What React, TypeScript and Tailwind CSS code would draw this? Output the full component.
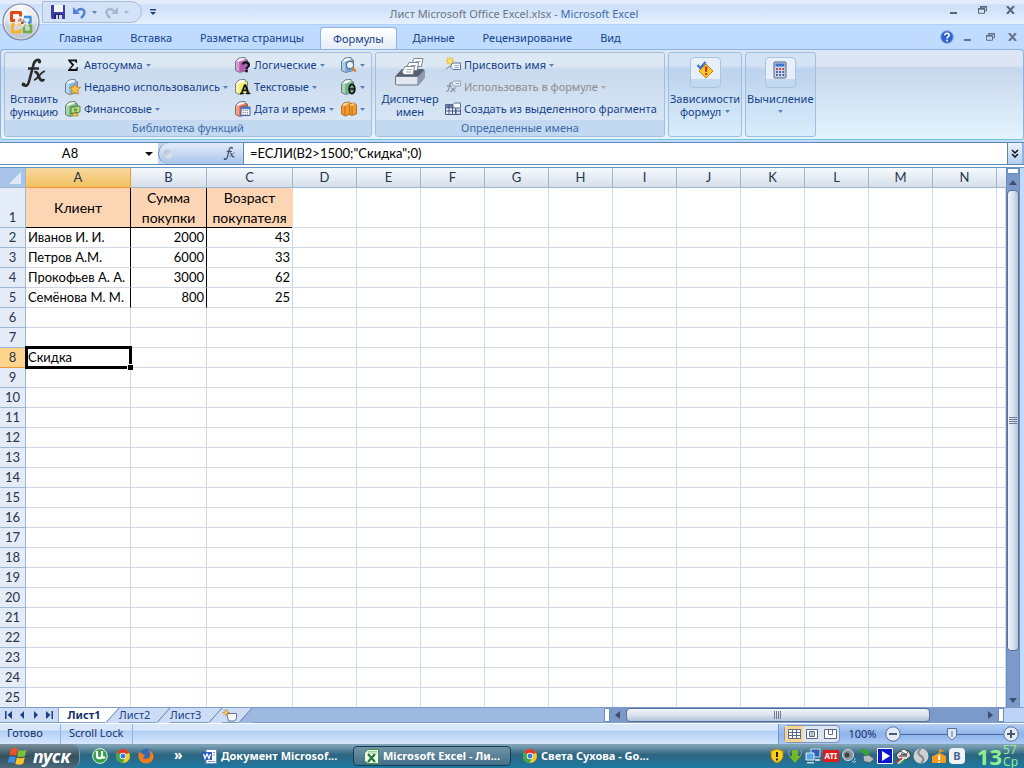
import type { ReactNode } from 'react'
import clsx from 'clsx'

const UI = "font-['Noto_Sans','Open_Sans',sans-serif]"
const CELL = "font-['Lato','Noto_Sans',sans-serif]"

const TABS = ['Главная', 'Вставка', 'Разметка страницы', 'Формулы', 'Данные', 'Рецензирование', 'Вид']
const COLUMNS = ['A', 'B', 'C', 'D', 'E', 'F', 'G', 'H', 'I', 'J', 'K', 'L', 'M', 'N']
const DATA: Record<number, [string, number, number]> = {
  2: ['Иванов И. И.', 2000, 43],
  3: ['Петров А.М.', 6000, 33],
  4: ['Прокофьев А. А.', 3000, 62],
  5: ['Семёнова М. М.', 800, 25],
}

function Caret({ color = '#5d82b5' }: { color?: string }) {
  return (
    <svg width="5" height="3" viewBox="0 0 5 3" className="shrink-0">
      <path d="M0 0h5L2.5 3z" fill={color} />
    </svg>
  )
}

/* ---------- icons ---------- */

function OfficeLogo() {
  return (
    <svg width="38" height="38" viewBox="0 0 38 38">
      <defs>
        <radialGradient id="orb" cx="50%" cy="25%" r="80%">
          <stop offset="0" stopColor="#ffffff" />
          <stop offset=".55" stopColor="#dfe4ec" />
          <stop offset="1" stopColor="#9aa8bd" />
        </radialGradient>
      </defs>
      <circle cx="19" cy="19" r="18" fill="url(#orb)" stroke="#7f8ea6" strokeWidth="1.2" />
      <circle cx="19" cy="19" r="16.5" fill="none" stroke="#fff" strokeOpacity=".8" />
      <path d="M3 20a16 16 0 0 0 32 0c-9 3-23 3-32 0z" fill="#c3cbd9" opacity=".5" />
      <g fill="none" strokeLinejoin="round">
        <path d="M13 17.500H9.500V9.500h9v4" stroke="#dd4a12" strokeWidth="3" />
        <path d="M18.500 15v2.500H16" stroke="#e8763c" strokeWidth="2" />
        <path d="M22 14h6.500v5.500H26" stroke="#3a8fe0" strokeWidth="2.400" />
        <path d="M21.500 16v3H24" stroke="#5fb0ee" strokeWidth="1.600" />
        <path d="M13 21.500h-2.500v7.500h7.500v-3" stroke="#f5b32a" strokeWidth="2.800" />
        <path d="M15 21.500h3.500V24" stroke="#f7ca62" strokeWidth="1.800" />
        <path d="M22 24v5h7v-6.500h-2.500" stroke="#6fae3c" strokeWidth="2.600" />
        <path d="M22 22.500h2.500" stroke="#8cc454" strokeWidth="1.800" />
      </g>
      <path d="M19 18.500h2.500V21H19z" fill="#b24b18" />
    </svg>
  )
}

function SaveIcon() {
  return (
    <svg width="14" height="14" viewBox="0 0 14 14">
      <path d="M0 0h14v14H1L0 13z" fill="#3c3fa8" />
      <path d="M3 0h9v7H3z" fill="#f4f7ff" />
      <path d="M3 9h8v5H3z" fill="#20246c" />
      <path d="M5 10h2v4H5zM8 10h3v4H8z" fill="#cfd6ee" />
    </svg>
  )
}

function UndoIcon({ color, flip = false }: { color: string; flip?: boolean }) {
  return (
    <svg width="13" height="13" viewBox="0 0 13 13" className={flip ? '-scale-x-100' : undefined}>
      <path d="M4 5c4-4 9-1 7 3-.6 1.600-1.500 2.800-3 4" fill="none" stroke={color} strokeWidth="2.400" />
      <path d="M0 1v7h7z" fill={color} />
    </svg>
  )
}

function Book({ cover, side, children }: { cover: string; side: string; children?: ReactNode }) {
  return (
    <svg width="16" height="16" viewBox="0 0 16 16" className="shrink-0">
      <path d="M.5 4.500 4 1l6-.7v1.500L12.500 3v10.500L4.500 15.500l-4-2z" fill={side} stroke="#5b6470" strokeWidth=".8" />
      <path d="M4.300 5 12 3v10.500l-7.700 1.800z" fill={cover} />
      <path d="M1.500 4.500 4.300 1.800l5.200-.7v1L4.500 4.200z" fill="#fff" />
      {children}
    </svg>
  )
}

const icons = {
  sum: (
    <svg width="16" height="16" viewBox="0 0 16 16" className="shrink-0">
      <path d="M3 2.500h9V6h-1c-.2-1.300-.7-1.800-2-1.800H6l3.200 3.600L5.600 12h4.200c1.300 0 1.900-.6 2.200-1.900h1L12.500 14H3v-1l4-4.700L3 3.600z" fill="#111" />
    </svg>
  ),
  recent: (
    <Book cover="#79b9e8" side="#b7dbf2">
      <path d="m10 4.500 1.600 3.500 3.900.5-2.800 2.600.7 4.100L10 13.300l-3.400 1.900.7-4.100-2.800-2.600 3.900-.5z" fill="#ffc640" stroke="#c9741a" strokeWidth=".8" />
    </Book>
  ),
  finance: (
    <Book cover="#6fae72" side="#a8d3a8">
      <path d="M6 6.500 15 5v6l-9 1.500z" fill="#b9d97d" stroke="#417b3d" strokeWidth=".8" />
      <circle cx="10.500" cy="8.800" r="1.600" fill="#5c9d45" />
      <path d="M7.500 12.300h5.500v2.700H7.500z" fill="#f0c54b" stroke="#8e7426" strokeWidth=".6" />
    </Book>
  ),
  logic: (
    <Book cover="#b05fae" side="#d79fd6">
      <path d="M8 7.500C8 4.500 14 4.500 14 8c0 2-2.500 2-2.500 4" fill="none" stroke="#111" strokeWidth="2.200" />
      <path d="M10.300 13h2.400v2.300h-2.400z" fill="#111" />
    </Book>
  ),
  text: (
    <Book cover="#f3ec6a" side="#f8f4ae">
      <path d="M5 15v-1h1l3.200-8.500h1.800L14.200 14h1v1h-4v-1h1l-.6-2H8.200l-.7 2h1.100v1zm3.700-4.200h2.500l-1.300-3.600z" fill="#111" stroke="#111" strokeWidth=".4" />
    </Book>
  ),
  date: (
    <Book cover="#e2603c" side="#f0a184">
      <path d="M6 6h9v8.500H6z" fill="#fff" stroke="#3f62a8" />
      <path d="M6 6h9v2.200H6z" fill="#4b78c8" />
      <path d="M7.500 9.500h6.500M7.500 11.500h6.500M7.500 13.300h6.500" stroke="#7c8aa8" strokeDasharray="1.200 1" />
    </Book>
  ),
  lookup: (
    <Book cover="#6fa3dc" side="#add0ee">
      <circle cx="9" cy="8" r="3.600" fill="#e8f5ff" stroke="#5f6f86" strokeWidth="1.200" />
      <path d="m11.500 10.800 3.300 3.700" stroke="#e07b28" strokeWidth="2.400" />
    </Book>
  ),
  math: (
    <Book cover="#6fae86" side="#a7d3b5">
      <ellipse cx="11" cy="10" rx="2.800" ry="4.600" fill="none" stroke="#111" strokeWidth="1.800" />
      <path d="M8.500 10h5" stroke="#111" strokeWidth="1.400" />
    </Book>
  ),
  more: (
    <svg width="16" height="16" viewBox="0 0 16 16" className="shrink-0">
      <path d="m.5 5 3-3.500 5-.5 1 1.500 4-.5 2 2v9l-5 1.500-2-1-4.500 1.500L.5 13z" fill="#f29a2e" stroke="#a85f12" strokeWidth=".8" />
      <path d="M4 5v9.500M8.500 3.500V14M11 5v9" stroke="#b86a16" strokeWidth=".9" />
      <path d="m1.500 4.600 2.500-2.600 4-.4-3.500 3zM9 4l2.500-1.500h2.500L11 4.700z" fill="#ffe0b0" />
    </svg>
  ),
  assign: (
    <svg width="16" height="16" viewBox="0 0 16 16" className="shrink-0">
      <path d="M5 0v8M1 4h8M2 1l6 6M8 1 2 7" stroke="#f0bc23" strokeWidth="1.300" />
      <circle cx="5" cy="4" r="2" fill="#ffe873" />
      <path d="M8 6h7.500v6.500H8L6 10.500V8z" fill="#f7faff" stroke="#5e7191" />
      <path d="M9.500 8.500H14M9.500 10.500H14" stroke="#93a6c4" />
      <path d="M1 12.500c2-3 3-3 5-2.500" fill="none" stroke="#6d7b92" />
    </svg>
  ),
  use: (
    <svg width="16" height="16" viewBox="0 0 16 16" className="shrink-0">
      <path d="M7.500 4c-2-1-2.600.5-3 3s-.8 6-3.500 5M2 7h4.500M6 9c2-.5 2.500 4 4.500 3M10.500 8.500 5.500 13" fill="none" stroke="#8c95a3" strokeWidth="1.300" />
      <path d="M9 2h6.500v5H9L7.500 5.500v-2z" fill="#e9eef5" stroke="#93a2b8" />
      <path d="M10.500 4.500H14" stroke="#93a2b8" />
    </svg>
  ),
  create: (
    <svg width="16" height="16" viewBox="0 0 16 16" className="shrink-0">
      <path d="M.5 3.500h10v10H.5z" fill="#eef3fb" stroke="#465a80" />
      <path d="M.5 3.500h10v3.300H.5z" fill="#6d80a6" />
      <path d="M.5 6.800h15M.5 10h15M4 3.500v10M7.500 3.500v10M11 8v5.500" stroke="#465a80" />
      <path d="M9.500 2h6v5h-6L8 5.500v-2z" fill="#f8fbff" stroke="#5e7191" />
      <path d="M10.500 13.500h5V8" fill="none" stroke="#465a80" />
    </svg>
  ),
}

function FxIcon({ size, color = '#2b2b2b' }: { size: number; color?: string }) {
  return (
    <svg width={size} height={size} viewBox="0 0 32 32">
      <path d="M22 4.500c-1-2.500-5-2.500-6.500 3L11 24.500c-1 4-3 5-5.500 3.500M10 11.500h11" fill="none" stroke={color} strokeWidth="2.600" />
      <circle cx="21.500" cy="4.800" r="1.700" fill={color} />
      <circle cx="5.500" cy="27.500" r="1.900" fill={color} />
      <path d="M16.500 15.500c4-2.500 4 8 7.500 8 1 0 1.600-.6 2-1.500" fill="none" stroke={color} strokeWidth="2.800" />
      <path d="M27 14.500c-3-1-7 7.500-11 8.500" fill="none" stroke={color} strokeWidth="1.700" />
    </svg>
  )
}

function NameManagerIcon() {
  return (
    <svg width="32" height="32" viewBox="0 0 32 32">
      <path d="M1.500 19 8 12h21l1.500 1v8l-6 7H2.500l-1-1z" fill="#566173" />
      <path d="M1.500 19.500h22.500V28H2.500l-1-1z" fill="#e3e8f0" stroke="#6b7686" />
      <path d="m24 19.500 6.500-6.500v8L24 28z" fill="#909cae" />
      <g fill="#fff" stroke="#7a8596" strokeWidth="1">
        <path d="M20 1.500h9l-1.500 8H19l-1.500-2z" />
        <path d="M15 5.500h9.500l-1.500 8h-9l-2-2.500z" />
        <path d="M11 9.500h9.500l-1.500 8h-9l-2-2.500z" />
      </g>
      <path d="M21.500 4.500h5M17 8.500h5M12.500 12.500h5.500M12 15h5.500" stroke="#9aa7ba" />
    </svg>
  )
}

function AuditIcon() {
  return (
    <svg width="18" height="18" viewBox="0 0 18 18">
      <path d="m10 3 7 7-7 7-7-7z" fill="#ffc828" stroke="#b88717" />
      <path d="M8.800 5.500h2.700l-.6 5.500H9.400zM9.200 12h2v2h-2z" fill="#d02a1c" />
      <path d="m1.500 4 2.800 3L9.500 1" fill="none" stroke="#3e73c8" strokeWidth="2.200" />
    </svg>
  )
}

function CalcIcon() {
  return (
    <svg width="14" height="18" viewBox="0 0 14 18">
      <rect x="1" y="1" width="12" height="16" rx="1" fill="#c9d5ea" stroke="#51607e" />
      <path d="M2.500 2.500h9v3h-9z" fill="#3f73d2" />
      <g strokeWidth="1.800" strokeDasharray="1.800 1.400">
        <path d="M3 8h8.500" stroke="#c04141" />
        <path d="M3 11h8.500M3 14h8.500" stroke="#4d5f98" />
      </g>
    </svg>
  )
}

function ChromeIcon() {
  return (
    <svg width="14" height="14" viewBox="0 0 14 14" className="shrink-0">
      <circle cx="7" cy="7" r="7" fill="#f5cb24" />
      <path d="M7 7 .9 3.500A7 7 0 0 1 13.100 3.500z" fill="#dc3b2a" />
      <path d="M7 7 .9 3.500A7 7 0 0 0 6.500 14L9 9z" fill="#3fa648" />
      <circle cx="7" cy="7" r="3.300" fill="#fff" />
      <circle cx="7" cy="7" r="2.500" fill="#3f7fd6" />
    </svg>
  )
}

function WindowButtons({ big = false }: { big?: boolean }) {
  const color = big ? '#66738a' : '#56647c'
  return (
    <>
      <button type="button" aria-label="Свернуть" className="flex h-4 w-4 items-center justify-center">
        <svg width="8" height="8" viewBox="0 0 8 8"><path d="M0 6h7v2H0z" fill={color} /></svg>
      </button>
      <button type="button" aria-label="Восстановить" className="flex h-4 w-4 items-center justify-center">
        <svg width="9" height="8" viewBox="0 0 9 8"><path d="M2.500 2.500V.8h6v4H7M.5 2.800h6v4.500h-6z" fill="none" stroke={color} /><path d="M0 2h7v1.500H0zM2 0h7v1.500H2z" fill={color} /></svg>
      </button>
      <button type="button" aria-label="Закрыть" className="flex h-4 w-4 items-center justify-center">
        <svg width="9" height="8" viewBox="0 0 9 8"><path d="m1 0 7 8M8 0 1 8" stroke={color} strokeWidth="2" /></svg>
      </button>
    </>
  )
}

/* ---------- title and ribbon ---------- */

function TitleBar() {
  return (
    <header className="flex h-[25px] shrink-0 items-center border-b border-[#b0cffa] bg-linear-to-b from-[#e3ecfa] from-15% via-[#cbdff8] via-20% to-[#e4f0fd] pl-[42px] pr-1">
      <div className="flex h-[22px] items-center gap-2 rounded-r-full border border-[#a9bfdf] bg-[#d3e2f6] pl-2 pr-3">
        <button type="button" aria-label="Сохранить"><SaveIcon /></button>
        <button type="button" aria-label="Отменить" className="flex items-center gap-1.5"><UndoIcon color="#4f7fd6" /><Caret /></button>
        <button type="button" aria-label="Вернуть" className="flex items-center gap-1.5"><UndoIcon color="#a9b6ca" flip /><Caret color="#a9b6ca" /></button>
      </div>
      <button type="button" aria-label="Настройка панели быстрого доступа" className="ml-2">
        <svg width="6" height="7" viewBox="0 0 6 7"><path d="M0 0h6v1.500H0zM0 3h6L3 6z" fill="#24427c" /></svg>
      </button>
      <h1 className="flex-1 pr-[74px] pt-1 text-center text-[11px] leading-4 text-[#6b7584]">
        Лист Microsoft Office Excel.xlsx - <span className="text-[#3e6aaa]">Microsoft Excel</span>
      </h1>
      <div className="flex gap-3 pb-1 pr-0.5">
        <WindowButtons />
      </div>
    </header>
  )
}

function TabStrip() {
  return (
    <nav className="flex h-6 shrink-0 items-end gap-1 bg-[#bfdbff] pl-[47px] pr-1">
      {TABS.map((tab) => (
        <button
          key={tab}
          type="button"
          className={clsx(
            'h-[22px] whitespace-nowrap rounded-t px-3 text-[11px] leading-4 text-[#15428b]',
            tab === 'Формулы' && 'border-x border-t border-[#8db2e3] bg-linear-to-b from-white to-[#e4ecf7]',
          )}
        >
          {tab}
        </button>
      ))}
      <div className="ml-auto flex items-center gap-1.5 self-center">
        <button type="button" aria-label="Справка">
          <svg width="14" height="14" viewBox="0 0 14 14">
            <circle cx="7" cy="7" r="6.300" fill="#2e63d0" stroke="#8fa9d8" />
            <path d="M4.800 5.300C5 2.500 9.400 2.700 9.200 5.200 9 6.700 7 6.700 7 8.500" fill="none" stroke="#fff" strokeWidth="1.600" />
            <circle cx="7" cy="10.500" r="1" fill="#fff" />
          </svg>
        </button>
        <WindowButtons big />
      </div>
    </nav>
  )
}

function RibbonItem({ icon, label, disabled = false, menu = true }: { icon: ReactNode; label: string; disabled?: boolean; menu?: boolean }) {
  return (
    <button
      type="button"
      aria-label={label || 'Категория функций'}
      disabled={disabled}
      className={clsx('flex h-[22px] items-center gap-[3px] whitespace-nowrap', disabled ? 'text-[#8d8d8d]' : 'text-[#15428b]')}
    >
      {icon}
      {label && <span>{label}</span>}
      {menu && <Caret color={disabled ? '#a9a9a9' : undefined} />}
    </button>
  )
}

function Group({ title, children }: { title: string; children: ReactNode }) {
  return (
    <section className="flex flex-col overflow-hidden rounded-[3px] border border-[#a3bfdd] bg-linear-to-b from-[#dde8f5] from-15% via-[#c9daee] via-20% to-[#dce9f6]">
      <div className="flex flex-1 px-0.5 pt-px">{children}</div>
      <h2 className="h-4 bg-[#c2d9f1] text-center text-[11px] leading-4 text-[#3e6aaa]">{title}</h2>
    </section>
  )
}

function BigButton({ icon, lines }: { icon: ReactNode; lines: [string, string] }) {
  return (
    <button type="button" className="flex w-full flex-col items-center pt-[3px] leading-[13px] text-[#15428b]">
      <span className="mb-[3px] block h-8">{icon}</span>
      <span>{lines[0]}</span>
      <span>{lines[1]}</span>
    </button>
  )
}

function CollapsedGroup({ icon, line, last }: { icon: ReactNode; line: string; last?: string }) {
  return (
    <button type="button" className="flex flex-col items-center rounded-[3px] border border-[#9dbfe0] bg-linear-to-b from-[#d3e3f6] from-15% via-[#bdd2ec] via-20% to-[#d8eefb] px-px pt-1 leading-[13px] text-[#15428b]">
      <span className="mb-1 flex h-[31px] w-[31px] justify-center rounded border border-[#a9c3e0] bg-linear-to-b from-[#e7f0fa] from-72% to-[#c2d9f0] to-73% pt-[3px]">{icon}</span>
      <span>{line}</span>
      <span className="flex h-3 items-center gap-1">{last}<Caret /></span>
    </button>
  )
}

function Ribbon() {
  return (
    <div className="flex h-[91px] shrink-0 gap-[3px] rounded border border-[#8db2e3] border-b-[#74c5d8] bg-linear-to-b from-[#dbe5f3] from-18% via-[#c7d7ec] via-20% to-[#e3f4fe] px-[3px] py-0.5 text-[11px]">
      <Group title="Библиотека функций">
        <div className="mr-1 w-[54px]"><BigButton icon={<FxIcon size={32} />} lines={['Вставить', 'функцию']} /></div>
        <div className="w-[170px]">
          <RibbonItem icon={icons.sum} label="Автосумма" />
          <RibbonItem icon={icons.recent} label="Недавно использовались" />
          <RibbonItem icon={icons.finance} label="Финансовые" />
        </div>
        <div className="w-[106px]">
          <RibbonItem icon={icons.logic} label="Логические" />
          <RibbonItem icon={icons.text} label="Текстовые" />
          <RibbonItem icon={icons.date} label="Дата и время" />
        </div>
        <div className="w-7">
          <RibbonItem icon={icons.lookup} label="" />
          <RibbonItem icon={icons.math} label="" />
          <RibbonItem icon={icons.more} label="" />
        </div>
      </Group>
      <Group title="Определенные имена">
        <div className="mr-[3px] w-16"><BigButton icon={<NameManagerIcon />} lines={['Диспетчер', 'имен']} /></div>
        <div className="w-[217px]">
          <RibbonItem icon={icons.assign} label="Присвоить имя" />
          <RibbonItem icon={icons.use} label="Использовать в формуле" disabled />
          <RibbonItem icon={icons.create} label="Создать из выделенного фрагмента" menu={false} />
        </div>
      </Group>
      <CollapsedGroup icon={<AuditIcon />} line="Зависимости" last="формул" />
      <CollapsedGroup icon={<CalcIcon />} line="Вычисление" />
    </div>
  )
}

/* ---------- formula bar ---------- */

function FormulaBar() {
  return (
    <div className="mt-0.5 shrink-0 border-b border-[#6a94c8] bg-white pb-0.5">
      <div className={clsx('flex h-[23px] items-stretch border-y border-[#5f86b8] bg-[#c5d8f2] text-[13px]', CELL)}>
        <input aria-label="Имя" defaultValue="A8" className="w-[140px] bg-white text-center outline-none" />
        <button type="button" aria-label="Список имён" className="flex w-[18px] items-center justify-center bg-white">
          <svg width="8" height="4" viewBox="0 0 8 4"><path d="M0 0h8L4 4z" fill="#111" /></svg>
        </button>
        <div className="flex w-[85px] items-center justify-between rounded-l-full border-l border-[#6f8fbd] bg-linear-to-b from-[#e3edfb] to-[#a9c3ea] pl-1 pr-1.5">
          <span className="h-2.5 w-2.5 rounded-full border border-[#c9d6ea] bg-linear-to-br from-[#a9b6ca] to-[#eef3fa]" />
          <button type="button" aria-label="Вставить функцию"><FxIcon size={15} color="#47546b" /></button>
        </div>
        <input aria-label="Строка формул" defaultValue={'=ЕСЛИ(B2>1500;"Скидка";0)'} className="min-w-0 flex-1 border-x border-[#5f86b8] bg-white pl-1.5 outline-none" />
        <button type="button" aria-label="Развернуть строку формул" className="flex w-4 items-center justify-center border-r-2 border-[#8db2e3] bg-linear-to-b from-[#eaf2fd] to-[#b5cdf0]">
          <svg width="8" height="9" viewBox="0 0 8 9"><path d="m1 1 3 3 3-3M1 5l3 3 3-3" fill="none" stroke="#111" strokeWidth="1.500" /></svg>
        </button>
      </div>
    </div>
  )
}

/* ---------- sheet ---------- */

const GRID = 'border-b border-r border-[#d0d7e5] p-0'

function HeaderCells() {
  const head = 'border-r bg-[#fcd5b4] px-1 py-0 text-center align-middle text-[14px] leading-5 shadow-[inset_0_-1px_0_#000]'
  return (
    <>
      <td className={clsx(head, 'border-black')}>Клиент</td>
      <td className={clsx(head, 'border-black')}>Сумма покупки</td>
      <td className={clsx(head, 'border-[#fcd5b4]')}>Возраст покупателя</td>
    </>
  )
}

function DataCells({ row }: { row: number }) {
  const [name, sum, age] = DATA[row]
  return (
    <>
      <td className={clsx(GRID, 'whitespace-nowrap border-r-black pl-0.5')}>{name}</td>
      <td className={clsx(GRID, 'border-r-black pr-0.5 text-right')}>{sum}</td>
      <td className={clsx(GRID, 'pr-0.5 text-right')}>{age}</td>
    </>
  )
}

function SheetRow({ row }: { row: number }) {
  const filled = row === 1 || row in DATA
  const rest = COLUMNS.slice(filled ? 3 : 1)
  return (
    <tr className={row === 1 ? 'h-10' : 'h-5'}>
      <th
        scope="row"
        className={clsx(
          'border-b border-r p-0 align-bottom font-normal text-[#27344a]',
          row === 8 ? 'border-[#f29536] bg-[#ffd58d]' : 'border-[#9eb6ce] bg-[#e4ecf7]',
        )}
      >
        {row}
      </th>
      {row === 1 && <HeaderCells />}
      {row in DATA && <DataCells row={row} />}
      {!filled && (
        <td className={clsx(GRID, row === 8 && 'relative pl-0.5')}>
          {row === 8 && (
            <>
              Скидка
              <span className="absolute -bottom-0.5 -left-px -right-0.5 -top-0.5 border-3 border-black" />
              <span className="absolute -bottom-[3px] -right-[3px] z-10 h-1.5 w-1.5 border-l border-t border-white bg-black" />
            </>
          )}
        </td>
      )}
      {rest.map((c) => <td key={c} className={GRID} />)}
      <td className={GRID} />
    </tr>
  )
}

function Sheet() {
  return (
    <div className="flex min-h-0 flex-1">
      <div className="min-w-0 flex-1 overflow-hidden bg-white">
        <table className={clsx('w-full table-fixed border-separate border-spacing-0 text-[13px] leading-[19px] text-black', CELL)}>
          <colgroup>
            <col className="w-[26px]" />
            <col className="w-[105px]" />
            <col className="w-[76px]" />
            <col className="w-[86px]" />
            {COLUMNS.slice(3).map((c) => <col key={c} className="w-16" />)}
            <col />
          </colgroup>
          <thead>
            <tr className="h-5">
              <th className="border-b border-r border-[#9eb6ce] bg-[#a9c4e9] p-0">
                <svg width="12" height="12" viewBox="0 0 12 12" className="ml-auto mr-1"><path d="M12 0v12H0z" fill="#dfe9f7" /></svg>
              </th>
              {COLUMNS.map((c) => (
                <th
                  key={c}
                  scope="col"
                  className={clsx(
                    'border-b border-r p-0 font-normal text-[#27344a]',
                    c === 'A' ? 'border-[#f29536] bg-linear-to-b from-[#f9d99f] to-[#f1c15f]' : 'border-[#9eb6ce] bg-linear-to-b from-[#f6fafd] to-[#d5dfea]',
                  )}
                >
                  {c}
                </th>
              ))}
              <th className="border-b border-[#9eb6ce] bg-linear-to-b from-[#f6fafd] to-[#d5dfea] p-0" />
            </tr>
          </thead>
          <tbody>
            {Array.from({ length: 25 }, (_, i) => <SheetRow key={i} row={i + 1} />)}
          </tbody>
        </table>
      </div>
      <div className="mr-1 flex w-[14px] flex-col items-center border-x border-[#6b8dc0] bg-[#7b9ac9]">
        <span className="h-1.5 w-full border border-[#6b8dc0] bg-white" />
        <button type="button" aria-label="Вверх" className="flex h-4 items-center">
          <svg width="8" height="5" viewBox="0 0 8 5"><path d="M0 5h8L4 0z" fill="#3f4d6e" /></svg>
        </button>
        <div className="flex w-full flex-col items-center justify-center gap-px rounded-sm border border-[#5a6e98] bg-linear-to-r from-[#f1f5fa] via-[#d9e2ee] to-[#b4c5d9]" style={{ flex: '459 1 0' }}>
          {[0, 1, 2, 3].map((n) => <span key={n} className="h-px w-2 bg-[#6b7b96]" />)}
        </div>
        <div style={{ flex: '42 1 0' }} />
        <button type="button" aria-label="Вниз" className="flex h-[14px] items-center">
          <svg width="8" height="5" viewBox="0 0 8 5"><path d="M0 0h8L4 5z" fill="#3f4d6e" /></svg>
        </button>
      </div>
    </div>
  )
}

function Slant({ left, right }: { left: string; right: string }) {
  return (
    <svg width="14" height="15" viewBox="0 0 14 15" className="shrink-0">
      <path d="M0 0h14L1 15H0z" fill={left} />
      <path d="M14 0v15H1z" fill={right} />
      <path d="M14 0 1 14.500" stroke="#5f7fae" />
    </svg>
  )
}

function SheetTabs() {
  const nav = ['M1 0h1.500v8H1zM8 0v8L3.500 4z', 'M6 0v8L2 4z', 'M2 0v8l4-4z', 'M0 0v8l4.500-4zM5.500 0H7v8H5.500z']
  const names = ['Первый лист', 'Предыдущий лист', 'Следующий лист', 'Последний лист']
  return (
    <div className="flex h-4 shrink-0 items-stretch border-y border-[#7d9dc9] bg-[#9db8de] text-[11px] leading-[14px]">
      <div className="flex w-[59px] items-center justify-between border-r border-[#8aa8d2] bg-[#cbdcf4] px-1">
        {nav.map((d, i) => (
          <button key={d} type="button" aria-label={names[i]}>
            <svg width="8" height="8" viewBox="0 0 8 8"><path d={d} fill="#1d3f85" /></svg>
          </button>
        ))}
      </div>
      <button type="button" className="w-[46px] bg-white pl-1 font-bold text-[#15306b]">Лист1</button>
      <Slant left="#ffffff" right="#cbdcf4" />
      <button type="button" className="w-[37px] bg-[#cbdcf4] text-left text-[#15428b]">Лист2</button>
      <Slant left="#cbdcf4" right="#cbdcf4" />
      <button type="button" className="w-[38px] bg-[#cbdcf4] text-left text-[#15428b]">Лист3</button>
      <Slant left="#cbdcf4" right="#cbdcf4" />
      <button type="button" aria-label="Вставить лист" className="w-4 bg-[#cbdcf4]">
        <svg width="16" height="13" viewBox="0 0 16 13">
          <path d="M4.500 4.500h10v5l-2 2.500h-6z" fill="#f8fbff" stroke="#5e7191" />
          <path d="M4 0v7M.5 3.500h7M1.500 1l5 5M6.500 1l-5 5" stroke="#d98a1c" />
          <circle cx="4" cy="3.500" r="1.300" fill="#ffe16b" />
        </svg>
      </button>
      <Slant left="#cbdcf4" right="#9db8de" />
      <div style={{ flex: '353 1 0' }} />
      <span className="w-1.5 border border-[#6b8dc0] bg-white" />
      <div className="flex items-stretch bg-[#7b9ac9]" style={{ flex: '390 1 0' }}>
        <button type="button" aria-label="Влево" className="flex w-4 items-center justify-center">
          <svg width="5" height="8" viewBox="0 0 5 8"><path d="M5 0v8L0 4z" fill="#3f4d6e" /></svg>
        </button>
        <div className="flex items-center justify-center gap-px rounded-sm border border-[#5a6e98] bg-linear-to-b from-[#f1f5fa] via-[#dae2ee] to-[#b4c5d9]" style={{ flex: '305 1 0' }}>
          {[0, 1, 2, 3].map((n) => <span key={n} className="h-2 w-px bg-[#6b7b96]" />)}
        </div>
        <div style={{ flex: '53 1 0' }} />
        <button type="button" aria-label="Вправо" className="flex w-4 items-center justify-center">
          <svg width="5" height="8" viewBox="0 0 5 8"><path d="M0 0v8l5-4z" fill="#3f4d6e" /></svg>
        </button>
      </div>
      <span className="w-1.5 border border-[#6b8dc0] bg-white" />
      <span className="w-5 bg-[#bcd3f5]" />
    </div>
  )
}

/* ---------- status bar ---------- */

function ZoomButton({ plus = false }: { plus?: boolean }) {
  return (
    <button type="button" aria-label={plus ? 'Увеличить' : 'Уменьшить'}>
      <svg width="16" height="16" viewBox="0 0 16 16">
        <circle cx="8" cy="8" r="7.200" fill="#e4ebf5" stroke="#5b7094" />
        <path d={plus ? 'M4 7h3V4h2v3h3v2H9v3H7V9H4z' : 'M4 7h8v2H4z'} fill="#4a5873" />
      </svg>
    </button>
  )
}

function StatusBar() {
  const views = [
    { name: 'Обычный', d: 'M.5.500h12v9H.5zM.5 3.500h12M.5 6.500h12M4.500.500v9M8.500.500v9' },
    { name: 'Разметка страницы', d: 'M.5.500h11v9H.5zM3.500 2.500h5v5h-5zM4.500 4h3M4.500 6h3' },
    { name: 'Страничный режим', d: 'M.5.500h12v9H.5zM4.500.500v5M8.500.500v5M4.500 5.500h4' },
  ]
  return (
    <footer className="flex h-[21px] shrink-0 items-stretch border-t border-white bg-linear-to-b from-[#d9e7fb] from-30% via-[#b4cff5] via-35% to-[#d6e7fd] text-[11px] leading-[18px] text-[#15306b]">
      <span className="w-[61px] border-r border-[#8fb3e5] pl-[7px]">Готово</span>
      <span className="w-[72px] whitespace-nowrap border-r border-[#8fb3e5] pl-2">Scroll Lock</span>
      <div className="ml-auto flex items-center border-l border-[#6f96cf] bg-linear-to-b from-[#b5cff5] via-[#8fb4ea] to-[#a9c8f4] px-[5px]">
        <div className="flex rounded-sm border border-[#7f93b3] bg-[#dbe6f5]">
          {views.map((v, i) => (
            <button key={v.name} type="button" aria-label={v.name} className={clsx('flex h-4 w-[18px] items-center justify-center', i === 0 && 'bg-[#fbd592]')}>
              <svg width="13" height="10" viewBox="0 0 13 10"><path d={v.d} fill="#fff" stroke="#5c6880" /></svg>
            </button>
          ))}
        </div>
        <button type="button" className="w-[45px] text-center">100%</button>
        <ZoomButton />
        <div className="relative flex h-4 w-[102px] items-center justify-center">
          <span className="absolute inset-x-0 top-2 h-px bg-[#4b6a9c]" />
          <svg width="10" height="13" viewBox="0 0 10 13" className="relative"><path d="M.5.500h9V8L5 12.300.500 8z" fill="#dfe8f5" stroke="#5b7094" /><path d="M5 3v6" stroke="#5b7094" /></svg>
          <input type="range" aria-label="Масштаб" min={10} max={190} defaultValue={100} className="absolute inset-0 w-full opacity-0" />
        </div>
        <ZoomButton plus />
      </div>
    </footer>
  )
}

/* ---------- taskbar ---------- */

const tray = [
  { name: 'Безопасность', art: <><path d="M8 1l6 2v5c0 3-3 6-6 7-3-1-6-4-6-7V3z" fill="#f7cf1c" stroke="#a98405" /><path d="M7 4h2v5H7zM7 10.500h2v2H7z" fill="#222" /></> },
  { name: 'Загрузки', art: <><path d="M5 2h6v6h3l-6 7-6-7h3z" fill="#76b921" /><path d="M3 2C1 4 1 6 3 8M13 2c2 2 2 4 0 6" fill="none" stroke="#9ab" /></> },
  { name: 'Сеть', art: <><path d="M6 1h9v8H6z" fill="#2e5fb8" stroke="#cdd" /><path d="M1 5h8v7H1z" fill="#5aa6ea" stroke="#dee" /><path d="M2 14h7v1.500H2zM10 11h5v2h-5z" fill="#ccd3dd" /></> },
]

function TrayIcon({ name, children }: { name: string; children: ReactNode }) {
  return (
    <button type="button" aria-label={name}>
      <svg width="16" height="16" viewBox="0 0 16 16">{children}</svg>
    </button>
  )
}

function Tray() {
  return (
    <div className="ml-auto flex items-center gap-0.5 pr-1.5">
      {tray.map((t) => <TrayIcon key={t.name} name={t.name}>{t.art}</TrayIcon>)}
      <span className="flex h-3 w-4 items-center justify-center bg-[#e01b1b] text-[8px] font-bold text-white">ATI</span>
      <TrayIcon name="Громкость">
        <circle cx="7" cy="7" r="5.500" fill="#8b949c" stroke="#d6dde2" />
        <circle cx="6" cy="7" r="2.500" fill="#3c444b" />
        <path d="M11 14c2-1 3-2 3-4M13 15l2-2" stroke="#b7d3ef" fill="none" />
      </TrayIcon>
      <TrayIcon name="Извлечение устройства">
        <path d="m4 8 6-1 5 4-4 3.500-6-1z" fill="#b5bcc2" stroke="#4c5357" strokeWidth=".7" />
        <path d="M2 2h5V0l4 4-4 4V6H2z" fill="#37a531" transform="rotate(25 6 4)" />
      </TrayIcon>
      <TrayIcon name="Проигрыватель"><path d="M.5.500h15v15H.5z" fill="#0b18c9" stroke="#fff" /><path d="M5 3v10l8-5z" fill="#fff" /></TrayIcon>
      <TrayIcon name="Принтер">
        <path d="m1 7 5-5 8 1 2 5-5 4-8-1z" fill="#d8d8d8" stroke="#333" />
        <path d="m5 3 4-2 4 3-2 2z" fill="#fff" stroke="#333" strokeWidth=".7" />
        <path d="M4 8h8M6 6l6 1" stroke="#333" />
        <path d="m1 15 6-5" stroke="#e22" strokeWidth="1.500" />
        <path d="m3 15.500 6-5" stroke="#fff" strokeWidth="1.500" />
        <path d="m5 15.500 5-4" stroke="#2b4" strokeWidth="1.500" />
      </TrayIcon>
      <TrayIcon name="Служба"><circle cx="8" cy="8" r="7.500" fill="#cfd1d1" /><path d="M8 1c-5 3-2 6 0 7s4 4 0 7" fill="none" stroke="#858a8c" strokeWidth="2" /></TrayIcon>
      <TrayIcon name="Уведомления"><path d="M2 8 8 5V1l6 2-5 1v1l6 3v7H1V8z" fill="#f39a1c" /><path d="M7.200 7h2v5h-2zM7.200 13h2v1.500h-2z" fill="#fff" /></TrayIcon>
      <span className="flex h-4 w-4 items-center justify-center rounded-sm bg-[#eef3f7] text-[11px] font-bold text-[#44688f]">В</span>
      <div className="ml-2.5 flex items-center gap-px text-[#90f090]">
        <span className="text-[22px] font-bold leading-6">13</span>
        <span className="flex flex-col text-[12px] font-normal leading-3"><span>57</span><span>Ср</span></span>
      </div>
    </div>
  )
}

function Taskbar() {
  return (
    <div className="flex h-6 shrink-0 items-center overflow-hidden bg-linear-to-b from-[#7fa3b5] from-5% via-[#2c6580] via-45% to-[#1c7aa3] text-[11px] font-bold text-white">
      <button type="button" className="flex h-6 w-20 items-center gap-1.5 rounded-r-lg border-r border-[#7896a5] bg-linear-to-b from-[#7d929d] via-[#34505e] to-[#4b6c7b] pl-2 text-[18px] italic leading-6">
        <svg width="19" height="17" viewBox="0 0 19 17">
          <path d="M3 1c3-1.500 5-1 6.500.3L8 8C6 6.500 4 6.500 1.500 7.700z" fill="#ef5324" />
          <path d="M10.500 1.800C13 3 15 3 18.500 1.500L17 8c-3 1.500-5.500 1.300-8 .3z" fill="#7cc03a" />
          <path d="M1.200 9C4 7.800 6 8 7.800 9.200L6.300 15.500C4.500 14 2.500 14-.3 15z" fill="#3b8fe8" />
          <path d="M8.800 9.500c2.500 1 5 1 8-.3L15.300 15.500c-3 1.500-5.500 1.500-8 .3z" fill="#fbc526" />
        </svg>
        пуск
      </button>
      <div className="flex items-center gap-2 pl-3">
        <button type="button" aria-label="Торрент">
          <svg width="16" height="16" viewBox="0 0 16 16"><circle cx="8" cy="8" r="7.300" fill="#2f9e46" stroke="#e8f5ea" /><path d="M5 3v5c0 3 5 3 5 0V3M10 8c0 2 2 2 3 1" fill="none" stroke="#fff" strokeWidth="2.200" /></svg>
        </button>
        <button type="button" aria-label="Chrome"><ChromeIcon /></button>
        <button type="button" aria-label="Firefox">
          <svg width="16" height="16" viewBox="0 0 16 16"><circle cx="8.500" cy="7" r="6.500" fill="#3569b8" /><path d="M1 4c1 1 2 .5 3 1 0 2 3 1.500 3 3-1 1-2 1-2 2 2 2 6 1 7-2 .8-3-1-5-2-6 4 1 6 4 5.500 7.500C14.500 17 2 18 .5 9 .3 7 .5 5.500 1 4z" fill="#ef7f1a" /></svg>
        </button>
      </div>
      <button type="button" className="ml-5 w-7 pb-1 text-left text-[14px]">»</button>
      <button type="button" className="flex h-[22px] w-[151px] items-center gap-1 whitespace-nowrap">
        <svg width="15" height="15" viewBox="0 0 15 15" className="shrink-0"><path d="M4 .5h10.500v14H4z" fill="#fff" stroke="#6f8fc7" /><path d="M11 3.500h2M11 6h2M6 12.500h7" stroke="#7d97c6" /><path d="M0 3h10v8H0z" fill="#2c5bb3" /><path d="m1.500 5 1.500 4.500L5 5l2 4.500L8.500 5" fill="none" stroke="#fff" strokeWidth="1.300" /></svg>
        Документ Microsof...
      </button>
      <button type="button" className="flex h-5 w-[158px] items-center gap-1 whitespace-nowrap rounded-sm border border-[#123f58] bg-linear-to-b from-[#7593a5] to-[#3f6f88] pl-2.5">
        <svg width="15" height="15" viewBox="0 0 15 15" className="shrink-0"><path d="M4 .5h10.500v14H4L.5 12V4z" fill="#f2fbee" stroke="#3e9440" /><path d="M4 4h9M4 2.500h9" stroke="#9ccf92" /><path d="m4 5 7 8M11 5l-7 8" stroke="#28793a" strokeWidth="2.200" /></svg>
        Microsoft Excel - Ли...
      </button>
      <button type="button" className="flex h-[22px] items-center gap-1 whitespace-nowrap pl-3">
        <ChromeIcon />
        Света Сухова - Go...
      </button>
      <Tray />
    </div>
  )
}

export default function App() {
  return (
    <div className={clsx('relative flex h-screen w-full flex-col overflow-hidden bg-[#bfdbff]', UI)}>
      <TitleBar />
      <TabStrip />
      <Ribbon />
      <FormulaBar />
      <Sheet />
      <SheetTabs />
      <StatusBar />
      <Taskbar />
      <button type="button" aria-label="Кнопка Office" className="absolute left-0.5 top-[3px]">
        <OfficeLogo />
      </button>
    </div>
  )
}
